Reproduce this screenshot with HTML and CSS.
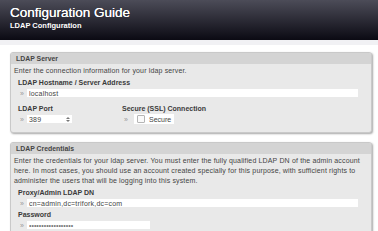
FILE: index.html
```html
<!DOCTYPE html>
<html lang="en">
<head>
  <meta charset="UTF-8">
  <meta name="viewport" content="width=device-width, initial-scale=1.0">
  <title>Configuration Guide</title>
  <link rel="stylesheet" href="styles.css">
</head>
<body>
  <div class="top">
    <h1>Configuration Guide</h1>
    <h2>LDAP Configuration</h2>
  </div>
  <div class="strip"></div>

  <div class="content">
    <div class="panel">
      <h3 class="panel-title">LDAP Server</h3>
      <div class="panel-body">
        <p>Enter the connection information for your ldap server.</p>
        <div class="field">
          <label class="label">LDAP Hostname / Server Address</label>
          <div class="row">
            <span class="raquo">&raquo;</span>
            <input class="text wide" type="text" value="localhost">
          </div>
        </div>
        <div class="cols">
          <div class="field port">
            <label class="label">LDAP Port</label>
            <div class="row">
              <span class="raquo">&raquo;</span>
              <span class="spin-box">
                <input class="text port-input" type="text" value="389">
                <span class="spin"><i class="up"></i><i class="down"></i></span>
              </span>
            </div>
          </div>
          <div class="field">
            <label class="label">Secure (SSL) Connection</label>
            <div class="row">
              <span class="raquo">&raquo;</span>
              <label class="check"><span class="box"></span>Secure</label>
            </div>
          </div>
        </div>
      </div>
    </div>

    <div class="panel">
      <h3 class="panel-title">LDAP Credentials</h3>
      <div class="panel-body">
        <p>Enter the credentials for your ldap server. You must enter the fully qualified LDAP DN of the admin account
          here. In most cases, you should use an account created specially for this purpose, with sufficient rights to
          administer the users that will be logging into this system.</p>
        <div class="field">
          <label class="label">Proxy/Admin LDAP DN</label>
          <div class="row">
            <span class="raquo">&raquo;</span>
            <input class="text wide" type="text" value="cn=admin,dc=trifork,dc=com">
          </div>
        </div>
        <div class="field">
          <label class="label">Password</label>
          <div class="row">
            <span class="raquo">&raquo;</span>
            <input class="text pass" type="password" value="secretpassword1234">
          </div>
        </div>
      </div>
    </div>
  </div>
</body>
</html>
```

FILE: styles.css
```css
body {
  margin: 0;
  font-family: "Liberation Sans", Arial, sans-serif;
  font-size: 7px;
  color: #444;
  background: #fff;
}

.top {
  height: 40px;
  box-sizing: border-box;
  padding: 5px 10px 0;
  background: linear-gradient(#4c4c58, #0b0a13);
  color: #fff;
}

.top h1 {
  margin: 0;
  font-size: 13.5px;
  line-height: 16px;
  font-weight: normal;
  text-shadow: 0 0 0.4px #fff;
}

.top h2 {
  margin: 0;
  font-size: 7.5px;
  line-height: 9px;
  font-weight: bold;
}

.strip {
  height: 5px;
  background: #f1f1f4;
}

.content {
  padding: 7px 6px 0 10px;
}

.panel {
  background: #e9e9e9;
  border: 1px solid #c9c9c9;
  border-radius: 3px;
  box-shadow: 1px 1px 2px rgba(0, 0, 0, 0.35);
  margin-bottom: 9px;
  overflow: hidden;
}

.panel-title {
  margin: 0;
  height: 11px;
  line-height: 11px;
  padding-left: 5px;
  background: #d4d4d4;
  font-size: 6.9px;
  font-weight: bold;
  color: #444;
}

.panel-body {
  padding: 2px 3px 8px;
}

.panel-body p {
  margin: 0;
  line-height: 10px;
  letter-spacing: 0.15px;
}

.field {
  padding-left: 4px;
  margin-top: 2px;
}

.label {
  display: block;
  font-weight: bold;
  font-size: 7px;
  line-height: 10px;
  color: #3a3a3a;
}

.row {
  display: flex;
  align-items: center;
  height: 10px;
}

.raquo {
  width: 7px;
  padding-left: 2px;
  color: #999;
}

.text {
  border: 0;
  outline: 0;
  background: #fff;
  height: 8px;
  padding: 0 2px;
  font: inherit;
  letter-spacing: 0.2px;
  color: #444;
}

.wide {
  flex: 1;
  margin-right: 10px;
}

.pass {
  width: 119px;
  letter-spacing: 0;
  color: #777;
}

.cols {
  display: flex;
  margin-top: 4px;
}

.port {
  width: 100px;
}

.spin-box {
  display: flex;
  align-items: center;
  background: #fff;
  height: 8px;
  width: 45px;
}

.port-input {
  width: 30px;
}

.spin {
  display: flex;
  flex-direction: column;
  gap: 1px;
  margin-left: 5px;
}

.spin i {
  width: 0;
  height: 0;
  border-left: 2px solid transparent;
  border-right: 2px solid transparent;
}

.spin .up {
  border-bottom: 2px solid #777;
}

.spin .down {
  border-top: 2px solid #777;
}

.check {
  display: flex;
  align-items: center;
  gap: 4px;
  height: 10px;
  width: 37px;
  margin-left: 3px;
  padding-left: 3px;
  background: #fff;
}

.check .box {
  width: 6px;
  height: 6px;
  border: 1px solid #b5b5b5;
  border-radius: 1px;
  background: #fafafa;
}
```
